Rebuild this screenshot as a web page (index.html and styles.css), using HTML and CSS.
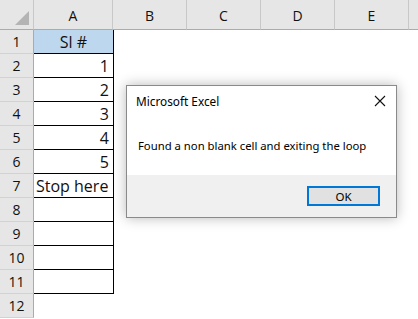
FILE: index.html
```html
<!DOCTYPE html>
<html lang="en">
<head>
    <meta charset="UTF-8">
    <title>Microsoft Excel - Loop</title>
    <link rel="stylesheet" href="styles.css">
</head>
<body>
    <div class="sheet">
        <div class="corner"><span class="corner-tri"></span></div>
        <div class="col-head">A</div>
        <div class="col-head">B</div>
        <div class="col-head">C</div>
        <div class="col-head">D</div>
        <div class="col-head">E</div>
        <div class="col-head last"></div>

        <div class="row-head">1</div><div class="cell box title">Sl #</div><div class="blank"></div><div class="blank"></div><div class="blank"></div><div class="blank"></div><div class="blank"></div>
        <div class="row-head">2</div><div class="cell box num">1</div><div class="blank"></div><div class="blank"></div><div class="blank"></div><div class="blank"></div><div class="blank"></div>
        <div class="row-head">3</div><div class="cell box num">2</div><div class="blank"></div><div class="blank"></div><div class="blank"></div><div class="blank"></div><div class="blank"></div>
        <div class="row-head">4</div><div class="cell box num">3</div><div class="blank"></div><div class="blank"></div><div class="blank"></div><div class="blank"></div><div class="blank"></div>
        <div class="row-head">5</div><div class="cell box num">4</div><div class="blank"></div><div class="blank"></div><div class="blank"></div><div class="blank"></div><div class="blank"></div>
        <div class="row-head">6</div><div class="cell box num">5</div><div class="blank"></div><div class="blank"></div><div class="blank"></div><div class="blank"></div><div class="blank"></div>
        <div class="row-head">7</div><div class="cell box text">Stop here</div><div class="blank"></div><div class="blank"></div><div class="blank"></div><div class="blank"></div><div class="blank"></div>
        <div class="row-head">8</div><div class="cell box"></div><div class="blank"></div><div class="blank"></div><div class="blank"></div><div class="blank"></div><div class="blank"></div>
        <div class="row-head">9</div><div class="cell box"></div><div class="blank"></div><div class="blank"></div><div class="blank"></div><div class="blank"></div><div class="blank"></div>
        <div class="row-head">10</div><div class="cell box"></div><div class="blank"></div><div class="blank"></div><div class="blank"></div><div class="blank"></div><div class="blank"></div>
        <div class="row-head">11</div><div class="cell box"></div><div class="blank"></div><div class="blank"></div><div class="blank"></div><div class="blank"></div><div class="blank"></div>
        <div class="row-head">12</div><div class="cell"></div><div class="blank"></div><div class="blank"></div><div class="blank"></div><div class="blank"></div><div class="blank"></div>
    </div>

    <div class="msgbox">
        <div class="msgbox-title">
            <span>Microsoft Excel</span>
            <svg class="msgbox-close" width="12" height="12" viewBox="0 0 12 12">
                <path d="M1 1 L11 11 M11 1 L1 11" stroke="#111" stroke-width="1.1" fill="none"/>
            </svg>
        </div>
        <div class="msgbox-body">Found a non blank cell and exiting the loop</div>
        <div class="msgbox-foot">
            <button class="msgbox-ok">OK</button>
        </div>
    </div>
</body>
</html>
```

FILE: styles.css
```css
:root {
    --head-bg: #e6e6e6;
    --head-line: #ababab;
    --head-sep: #c8c8c8;
    --cell-font: "Open Sans", "Liberation Sans", sans-serif;
    --ui-font: "Noto Sans", "Liberation Sans", sans-serif;
}

html, body {
    margin: 0;
    padding: 0;
    background: #fff;
    overflow: hidden;
}

body {
    font-family: var(--cell-font);
    color: #111;
}

.sheet {
    display: grid;
    grid-template-columns: 34px 79px 74px 74px 74px 74px 1fr;
    grid-template-rows: 30px repeat(12, 24px);
    width: 418px;
}

.corner {
    background: var(--head-bg);
    border-right: 1px solid var(--head-sep);
    border-bottom: 1px solid var(--head-line);
    position: relative;
}

.corner-tri {
    position: absolute;
    right: 4px;
    bottom: 4px;
    width: 0;
    height: 0;
    border-left: 14px solid transparent;
    border-bottom: 14px solid #b4b4b4;
}

.col-head {
    background: var(--head-bg);
    border-right: 1px solid var(--head-sep);
    border-bottom: 1px solid var(--head-line);
    display: flex;
    align-items: center;
    justify-content: center;
    font-size: 14px;
    padding-top: 1px;
}

.col-head.last {
    border-right: none;
}

.row-head {
    background: var(--head-bg);
    border-right: 1px solid var(--head-line);
    border-bottom: 1px solid #d2d2d2;
    display: flex;
    align-items: center;
    justify-content: center;
    font-size: 14px;
}

.cell {
    display: flex;
    align-items: center;
    font-size: 16px;
    padding: 0 4px;
    white-space: nowrap;
}

.cell.box {
    border-right: 1px solid #000;
    border-bottom: 1px solid #000;
    margin-right: -1px;
}

.cell.title {
    background: #bdd7ee;
    justify-content: center;
}

.cell.num {
    justify-content: flex-end;
}

.cell.text {
    padding-left: 2px;
}

.msgbox {
    position: absolute;
    left: 126px;
    top: 85px;
    width: 269px;
    height: 131px;
    background: #fff;
    border: 1px solid #8a8a8a;
    box-shadow: 0 0 12px rgba(0, 0, 0, 0.28);
    display: flex;
    flex-direction: column;
    font-family: var(--ui-font);
    font-size: 11.3px;
    color: #000;
}

.msgbox-title {
    height: 30px;
    display: flex;
    align-items: center;
    justify-content: space-between;
    padding: 0 9px 0 9px;
    font-size: 11.8px;
}

.msgbox-close {
    margin-right: 1px;
}

.msgbox-body {
    flex: 1;
    display: flex;
    align-items: center;
    padding-left: 11px;
    padding-bottom: 1px;
}

.msgbox-foot {
    height: 42px;
    background: #f0f0f0;
    display: flex;
    align-items: center;
    justify-content: flex-end;
    padding-right: 16px;
}

.msgbox-ok {
    width: 73px;
    height: 20px;
    border: 2px solid #0078d7;
    background: #e1e1e1;
    font-family: var(--ui-font);
    font-size: 11.5px;
    padding: 0;
    color: #000;
}
```
